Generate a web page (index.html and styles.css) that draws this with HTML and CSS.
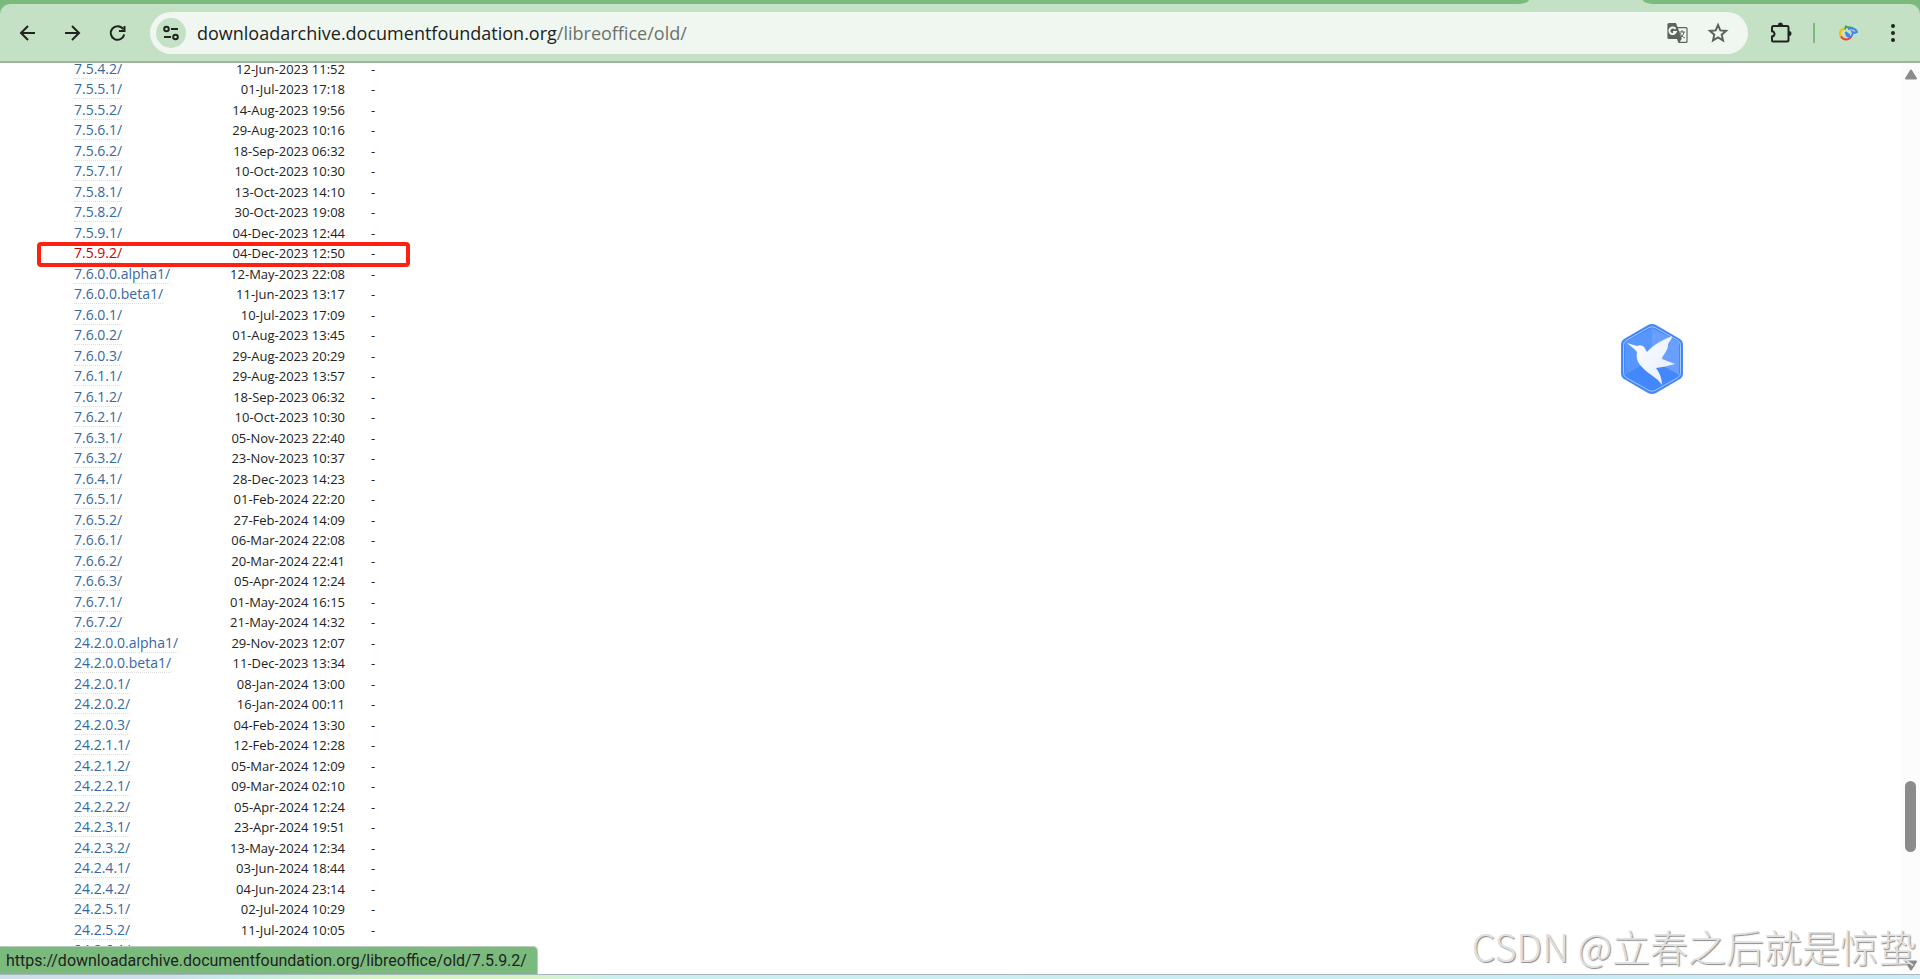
FILE: index.html
```html
<!DOCTYPE html>
<html lang="en">
<head>
<meta charset="utf-8">
<title>Index of /libreoffice/old/</title>
<link rel="stylesheet" href="styles.css">
</head>
<body>
<div class="browser">
  <header class="chrome">
    <div class="tabstrip"><span class="tabs-left"></span><span class="tabs-right"></span></div>
    <nav class="toolbar">
      <button class="tool" aria-label="Back"><svg width="24" height="24" viewBox="0 0 24 24"><path d="M19 12H5.500M12 5l-7 7 7 7"/></svg></button>
      <button class="tool" aria-label="Forward"><svg width="24" height="24" viewBox="0 0 24 24"><path d="M4 12h13.500M11 5l7 7-7 7"/></svg></button>
      <button class="tool" aria-label="Reload"><svg width="24" height="24" viewBox="0 0 24 24"><path d="M18.200 13.500A6.800 6.800 0 1 1 17.200 8.200M18.500 5v5H13" /></svg></button>
      <div class="omnibox">
        <button class="site" aria-label="View site information"><svg width="18" height="18" viewBox="0 0 18 18"><circle cx="4.500" cy="5" r="2.300"/><circle cx="13.500" cy="13" r="2.300"/><path d="M9 5h7M2 13h7"/></svg></button>
        <div class="url" role="textbox" aria-label="Address">downloadarchive.documentfoundation.org<span>/libreoffice/old/</span></div>
        <button class="field-tool" aria-label="Translate this page"><svg width="24" height="24" viewBox="0 0 24 24"><path class="solid" d="M3 2h7l1.500 4H20a1.600 1.600 0 0 1 1.600 1.600v12.800A1.600 1.600 0 0 1 20 22h-7.500L11 18H3a1.600 1.600 0 0 1-1.600-1.600V3.600A1.600 1.600 0 0 1 3 2z"/><path class="paper" d="M12 7.200h7.800l.6.600v12.400l-.6.600h-6l2-3z"/><path class="gmark" d="M9.500 8A3.300 3.300 0 1 0 9.800 11H7"/><path class="wen" d="M13 11h6M16 9v2M18 11c-.6 3-2 4.500-4 6M14 12c1 2.300 2.500 3.800 5 5"/></svg></button>
        <button class="field-tool" aria-label="Bookmark this page"><svg width="22" height="22" viewBox="0 0 22 22"><path class="star" d="M11 3l2.300 5.400 5.800.5-4.400 3.800 1.300 5.700-5-3-5 3 1.300-5.700L2.900 8.900l5.800-.5z"/></svg></button>
      </div>
      <button class="tool extensions" aria-label="Extensions"><svg width="24" height="24" viewBox="0 0 24 24"><path d="M4.500 5H18a1.500 1.500 0 0 1 1.500 1.500V19a1.500 1.500 0 0 1-1.500 1.500H4A1 1 0 0 1 3 19.500V15.500c3.300 0 3.300-5.300 0-5.300V6.500A1.500 1.500 0 0 1 4.500 5z"/><path class="ink" d="M9 4a2.500 2.500 0 0 1 5 0zM20 10a2.500 2.500 0 0 1 0 5z"/></svg></button>
      <span class="separator"></span>
      <button class="tool profile" aria-label="Profile"><svg width="20" height="16" viewBox="0 0 20 16"><path stroke="#34a853" d="M6.500 4.500 8 1.500c2 1.500 4.500.5 7 1.600"/><path stroke="#fbbc04" d="M6.500 3.500C2 4 .500 8.500 3.500 12"/><path stroke="#ea4335" d="M3 11.500c2.500 4 8 3.500 10 .5"/><path stroke="#4285f4" d="M10 4c3-1 8-.5 9 3l-2.500 1-2-1c1 2-.5 3-1.500 5-2.500 0-5-1.500-5-5 1 2 2.500 3 4 2.500"/></svg></button>
      <button class="tool menu" aria-label="Menu"><svg width="24" height="24" viewBox="0 0 24 24"><g class="ink"><circle cx="12" cy="5" r="2"/><circle cx="12" cy="12" r="2"/><circle cx="12" cy="19" r="2"/></g></svg></button>
    </nav>
  </header>

  <div class="viewport">
    <main class="page">
      <table class="listing"><tbody id="rows"></tbody></table>
    </main>
    <div class="scrollbar">
      <svg width="14" height="12" viewBox="0 0 14 12"><path d="M7 1.500 12 9.500H2z"/></svg>
      <span class="thumb"></span>
      <svg width="14" height="12" viewBox="0 0 14 12"><path d="M7 10.500 12 2.500H2z"/></svg>
    </div>
    <svg class="bird" width="64" height="72" viewBox="0 0 64 72">
      <defs><linearGradient id="wing" x1="0" y1="0" x2="1" y2="1"><stop offset="0" stop-color="#fff"/><stop offset="1" stop-color="#e3edff"/></linearGradient></defs>
      <path d="M28 2q4-2 8 0l24 14q3 2 3 6v28q0 4-3 6L36 70q-4 2-8 0L4 56q-3-2-3-6V22q0-4 3-6z" fill="#4387fb"/>
      <path d="M32 5v31L5 52V19z" fill="#5795ff"/><path d="M32 5 59 19v33L32 36z" fill="#699fff"/>
      <path d="M29 4.500q3-1.500 6 0l23 13q2.500 1.500 2.500 5v27q0 3.500-2.500 5l-23 13q-3 1.500-6 0l-23-13q-2.500-1.500-2.500-5v-27q0-3.500 2.500-5z" fill="none" stroke="#a5c7ff"/>
      <path d="M7 20l10 3q4-2 7 1l3 5C34 21 43 17 52 13c0 5-5 6-4 11-2 6-6 9-6 12l13 5c-7 2-12 3-19 4 4 5 6 11 6 17-5-8-14-11-20-18-5-5-6-10-5-15-3-4-7-6-10-9z" fill="url(#wing)"/>
    </svg>
    <div class="status">https://downloadarchive.documentfoundation.org/libreoffice/old/7.5.9.2/</div>
    <div class="watermark">CSDN @立春之后就是惊蛰</div>
  </div>
  <div class="desktop"></div>
</div>
<script src="listing.js"></script>
</body>
</html>
```
FILE: styles.css
```css
* { box-sizing: border-box; }
body { margin: 0; font-family: "Open Sans", "Noto Sans", sans-serif; color: #222; background: #fff; }
.browser { height: 100vh; display: flex; flex-direction: column; overflow: hidden; }
.chrome { flex: none; background: #7abb7d; border-bottom: 2px solid #9fb3a0; }
.tabstrip { display: flex; justify-content: space-between; height: 4px; background: #c5e1c5; }
.tabs-left, .tabs-right { background: #7abb7d; }
.tabs-left { width: 1529px; border-bottom-right-radius: 12px 4px; }
.tabs-right { width: 277px; border-bottom-left-radius: 12px 4px; }
.toolbar { display: flex; align-items: center; height: 57px; padding: 0 15px 0 16px; background: #c5e1c5; border-radius: 10px 10px 0 0; }
button { display: flex; align-items: center; justify-content: center; padding: 0; border: 0; background: none; }
.tool { flex: none; width: 24px; height: 24px; margin-right: 21px; }
svg { display: block; fill: none; }
.tool svg, .site svg { stroke: #1f2421; stroke-width: 2; }
.tool .ink { fill: #1f2421; stroke: none; }
.omnibox { flex: 1; display: flex; align-items: center; min-width: 0; height: 42px; margin: 0 21px 0 -1px; padding: 0 18px 0 6px; border-radius: 21px; background: #eff7f0; }
.site { flex: none; width: 30px; height: 30px; border-radius: 50%; background: #c5e1c5; }
.url { flex: 1; margin-left: 11px; font-size: 18px; line-height: 24px; white-space: nowrap; color: #1c211d; }
.url span { color: #6c716d; }
.field-tool { flex: none; width: 24px; height: 24px; margin-left: 16px; }
.solid { fill: #5f6360; }
.paper { fill: #eff7f0; }
.gmark { stroke: #eff7f0; stroke-width: 2; }
.wen { stroke: #5f6360; stroke-width: 1; }
.star { stroke: #5f6360; stroke-width: 2; }
.tool.extensions { margin-right: 20px; }
.separator { width: 2px; height: 20px; margin-right: 21px; background: #7abb7d; }
.tool.profile svg { stroke-width: 2; stroke: none; }
.tool.menu { margin-right: 0; }

.viewport { position: relative; flex: 1; display: flex; min-height: 0; overflow: hidden; }
.page { flex: 1; padding-left: 39px; overflow: hidden; }
.listing { border-collapse: separate; border-spacing: 0; margin-top: -3px; }
.listing td { height: 20px; padding: 0; line-height: 18px; vertical-align: top; white-space: nowrap; }
.listing tr:nth-child(even) td { height: 21px; }
.listing .name { width: 173px; padding-left: 35px; font-size: 14px; }
.listing .date { width: 133px; text-align: right; font-size: 13px; }
.listing .size { width: 63px; padding-left: 26px; font-size: 13px; }
.listing a { display: inline-block; color: #36679f; text-decoration: none; border-bottom: 1px dotted #ddd; }
.listing .active a { color: #c00; }
.listing .active { outline: 4px solid #ff2012; outline-offset: -2px; border-radius: 2px; }
.scrollbar { flex: none; width: 19px; display: flex; flex-direction: column; align-items: center; padding: 6px 0 3px; background: #fcfcfc; }
.scrollbar svg { fill: #8b8b8b; stroke: #8b8b8b; stroke-width: 2; stroke-linejoin: round; }
.thumb { width: 11px; height: 71px; margin: auto 0 107px; border-radius: 6px; background: #8b8b8b; }
.bird { position: absolute; top: 260px; right: 236px; }
.status { position: absolute; left: 0; bottom: 0; height: 28px; padding: 0 10px 0 6px; border: 1px solid #bccbbd; border-left: 0; border-bottom: 0; border-radius: 0 5px 0 0; background: #7abb7d; font-family: Roboto, sans-serif; font-size: 16px; line-height: 28px; white-space: nowrap; }
.watermark { position: absolute; right: 4px; bottom: 0; font: 300 38px/56px "Noto Sans CJK SC", sans-serif; color: #e0e0e0; text-shadow: 1px 1px 1px #8a8a8a; white-space: nowrap; }
.desktop { flex: none; height: 5px; border-top: 1px solid #a5b6bd; background: linear-gradient(90deg, #cfdfe9 0, #cfdfe9 9%, #c6ebe8 12%, #d9f2c3 20%, #d8f2c5 28%, #c8f0f0 32%, #c8ebf7 100%); }
```
FILE: listing.js
```js
const listing = `7.5.4.2 12-Jun-2023 11:52
7.5.5.1 01-Jul-2023 17:18
7.5.5.2 14-Aug-2023 19:56
7.5.6.1 29-Aug-2023 10:16
7.5.6.2 18-Sep-2023 06:32
7.5.7.1 10-Oct-2023 10:30
7.5.8.1 13-Oct-2023 14:10
7.5.8.2 30-Oct-2023 19:08
7.5.9.1 04-Dec-2023 12:44
7.5.9.2 04-Dec-2023 12:50
7.6.0.0.alpha1 12-May-2023 22:08
7.6.0.0.beta1 11-Jun-2023 13:17
7.6.0.1 10-Jul-2023 17:09
7.6.0.2 01-Aug-2023 13:45
7.6.0.3 29-Aug-2023 20:29
7.6.1.1 29-Aug-2023 13:57
7.6.1.2 18-Sep-2023 06:32
7.6.2.1 10-Oct-2023 10:30
7.6.3.1 05-Nov-2023 22:40
7.6.3.2 23-Nov-2023 10:37
7.6.4.1 28-Dec-2023 14:23
7.6.5.1 01-Feb-2024 22:20
7.6.5.2 27-Feb-2024 14:09
7.6.6.1 06-Mar-2024 22:08
7.6.6.2 20-Mar-2024 22:41
7.6.6.3 05-Apr-2024 12:24
7.6.7.1 01-May-2024 16:15
7.6.7.2 21-May-2024 14:32
24.2.0.0.alpha1 29-Nov-2023 12:07
24.2.0.0.beta1 11-Dec-2023 13:34
24.2.0.1 08-Jan-2024 13:00
24.2.0.2 16-Jan-2024 00:11
24.2.0.3 04-Feb-2024 13:30
24.2.1.1 12-Feb-2024 12:28
24.2.1.2 05-Mar-2024 12:09
24.2.2.1 09-Mar-2024 02:10
24.2.2.2 05-Apr-2024 12:24
24.2.3.1 23-Apr-2024 19:51
24.2.3.2 13-May-2024 12:34
24.2.4.1 03-Jun-2024 18:44
24.2.4.2 04-Jun-2024 23:14
24.2.5.1 02-Jul-2024 10:29
24.2.5.2 11-Jul-2024 10:05
24.2.6.1 13-Aug-2024 11:40`;

document.getElementById("rows").innerHTML = listing.split("\n").map((line) => {
  const [name, date, time] = line.split(" ");
  const active = name === "7.5.9.2" ? ' class="active"' : "";
  return `<tr${active}><td class="name"><a href="${name}/">${name}/</a></td><td class="date">${date} ${time}</td><td class="size">-</td></tr>`;
}).join("");
```
